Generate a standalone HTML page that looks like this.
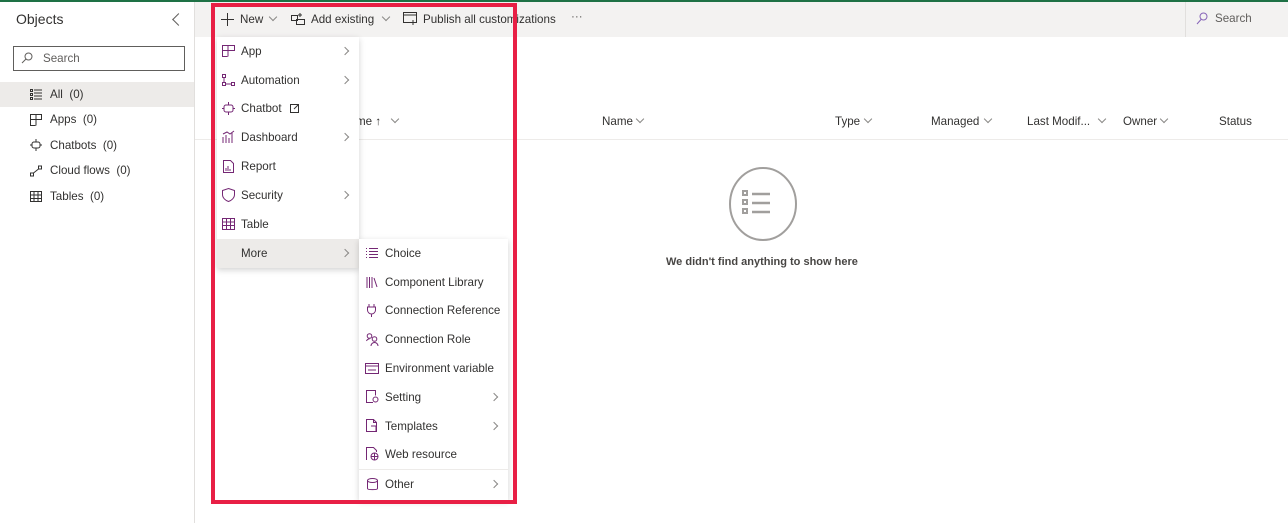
<!DOCTYPE html>
<html><head><meta charset="utf-8"><style>
*{box-sizing:border-box;margin:0;padding:0}
body{width:1288px;height:523px;overflow:hidden;background:#fff;font-family:"Liberation Sans",sans-serif;font-size:11.6px;color:#323130;position:relative}
.a{position:absolute}
.t{position:absolute;white-space:nowrap;line-height:14px}
svg{position:absolute;overflow:visible}
.chev{position:absolute;width:6px;height:6px;border-right:1px solid #8a8886;border-bottom:1px solid #8a8886;transform:rotate(-45deg)}
.dn{position:absolute;width:6px;height:6px;border-right:1px solid #8a8886;border-bottom:1px solid #8a8886;transform:rotate(45deg)}
</style></head><body>
<div class="a" style="left:0;top:0;width:1288px;height:2px;background:#1e7145"></div>
<div class="a" style="left:194px;top:2px;width:1px;height:521px;background:#e1dfdd"></div>
<div class="t" style="left:16px;top:12px;font-size:14px">Objects</div>
<div class="a" style="left:174px;top:15px;width:9px;height:9px;border-left:1px solid #605e5c;border-bottom:1px solid #605e5c;transform:rotate(45deg)"></div>
<div class="a" style="left:13px;top:46px;width:172px;height:25px;border:1px solid #605e5c"></div>
<svg style="left:21px;top:52px" width="12" height="12"><circle cx="7.5" cy="4.5" r="3.5" fill="none" stroke="#605e5c"/><path d="M5 7L1 11" stroke="#605e5c"/></svg>
<div class="t" style="left:43px;top:52px;color:#605e5c">Search</div>
<div class="a" style="left:0;top:82px;width:194px;height:25px;background:#edebe9"></div>
<svg style="left:30px;top:89px" width="12" height="12" stroke="#323130" fill="none"><path d="M4 1h8M4 4h8M4 7h8M4 10h8"/><rect x="0.5" y="0.5" width="2" height="2"/><rect x="0.5" y="4.5" width="2" height="2"/><rect x="0.5" y="8.5" width="2" height="2"/></svg>
<div class="t" style="left:50px;top:88px">All&nbsp; (0)</div>
<svg style="left:30px;top:114px" width="12" height="12" stroke="#323130" fill="none"><path d="M0.5 0.5h11v5h-11zM6 0.5v11M0.5 5.5v6h5"/></svg>
<div class="t" style="left:50px;top:113px">Apps&nbsp; (0)</div>
<svg style="left:30px;top:139px" width="12" height="12" stroke="#323130" fill="none"><rect x="2" y="3" width="8" height="6" rx="2"/><path d="M6 0v3M6 9v3M0 6h2M10 6h2"/></svg>
<div class="t" style="left:50px;top:139px">Chatbots&nbsp; (0)</div>
<svg style="left:30px;top:165px" width="12" height="12" stroke="#323130" fill="none"><rect x="0.5" y="8" width="3" height="3"/><rect x="8.5" y="1" width="3" height="3"/><path d="M3.5 8L8.5 4"/></svg>
<div class="t" style="left:50px;top:164px">Cloud flows&nbsp; (0)</div>
<svg style="left:30px;top:191px" width="12" height="12" stroke="#323130" fill="none"><rect x="0.5" y="0.5" width="11" height="10"/><path d="M0.5 4h11M0.5 7.5h11M4 0.5v10M8 0.5v10"/></svg>
<div class="t" style="left:50px;top:190px">Tables&nbsp; (0)</div>
<div class="a" style="left:195px;top:2px;width:1093px;height:35px;background:#f3f2f1"></div>
<div class="a" style="left:1185px;top:2px;width:1px;height:35px;background:#e1dfdd"></div>
<svg style="left:221px;top:13px" width="13" height="13" stroke="#323130"><path d="M6.5 0v13M0 6.5h13"/></svg>
<div class="t" style="left:240px;top:13px">New</div>
<div class="dn" style="left:270px;top:14px"></div>
<svg style="left:291px;top:12px" width="14" height="13" stroke="#323130" fill="none"><rect x="0.5" y="3.5" width="6" height="5"/><rect x="5.5" y="7.5" width="8" height="5"/><path d="M9 1v4M7 3h4"/></svg>
<div class="t" style="left:311px;top:13px">Add existing</div>
<div class="dn" style="left:383px;top:14px"></div>
<svg style="left:403px;top:12px" width="14" height="13" stroke="#323130" fill="none"><rect x="0.5" y="0.5" width="13" height="10"/><path d="M0.5 3h13M10 8v5"/></svg>
<div class="t" style="left:423px;top:13px">Publish all customizations</div>
<div class="t" style="left:571px;top:10px;color:#605e5c">···</div>
<svg style="left:1196px;top:12px" width="12" height="13"><circle cx="7.5" cy="4.5" r="3.5" fill="none" stroke="#8764b8"/><path d="M5 7.5L1 12" stroke="#8764b8"/></svg>
<div class="t" style="left:1215px;top:12px;color:#605e5c">Search</div>
<div class="a" style="left:195px;top:139px;width:1093px;height:1px;background:#edebe9"></div>
<div class="t" style="left:356px;top:115px">me ↑</div><div class="dn" style="left:392px;top:116px"></div>
<div class="t" style="left:602px;top:115px">Name</div><div class="dn" style="left:637px;top:116px"></div>
<div class="t" style="left:835px;top:115px">Type</div><div class="dn" style="left:865px;top:116px"></div>
<div class="t" style="left:931px;top:115px">Managed</div><div class="dn" style="left:985px;top:116px"></div>
<div class="t" style="left:1027px;top:115px">Last Modif...</div><div class="dn" style="left:1099px;top:116px"></div>
<div class="t" style="left:1123px;top:115px">Owner</div><div class="dn" style="left:1161px;top:116px"></div>
<div class="t" style="left:1219px;top:115px">Status</div>
<svg style="left:729px;top:167px" width="68" height="74" fill="none" stroke="#a19f9d" stroke-width="2"><ellipse cx="34" cy="37" rx="33" ry="36"/><path d="M23 27h18M23 36h18M23 45h18" stroke-width="2.5"/><rect x="14" y="24" width="4" height="4"/><rect x="14" y="33" width="4" height="4"/><rect x="14" y="42" width="4" height="4"/></svg>
<div class="t" style="left:666px;top:255px;font-size:11px;font-weight:bold;color:#484644">We didn't find anything to show here</div>
<div class="a" style="left:217px;top:37px;width:142px;height:231px;background:#fff;box-shadow:0 2px 6px rgba(0,0,0,.18)"></div>
<div class="a" style="left:217px;top:239px;width:142px;height:29px;background:#edebe9"></div>
<svg style="left:222px;top:45px" width="13" height="12" stroke="#742774" fill="none"><path d="M0.5 0.5h12v5h-12zM6 0.5v11M0.5 5.5v6h5"/></svg>
<div class="t" style="left:241px;top:45px">App</div><div class="chev" style="left:342px;top:48px"></div>
<svg style="left:222px;top:74px" width="13" height="13" stroke="#742774" fill="none"><rect x="0.5" y="0.5" width="3" height="3"/><rect x="0.5" y="8.5" width="3" height="3"/><rect x="9.5" y="8.5" width="3" height="3"/><path d="M2 3.5v5M3.5 10h6"/></svg>
<div class="t" style="left:241px;top:74px">Automation</div><div class="chev" style="left:342px;top:77px"></div>
<svg style="left:222px;top:102px" width="13" height="13" stroke="#742774" fill="none"><rect x="2" y="3" width="9" height="7" rx="2"/><path d="M6.5 0v3M6.5 10v3M0 6.5h2M11 6.5h2"/></svg>
<div class="t" style="left:241px;top:102px">Chatbot</div>
<svg style="left:290px;top:104px" width="9" height="9" stroke="#323130" fill="none"><rect x="0.5" y="0.5" width="8" height="8"/><path d="M4 5l4-4"/></svg>
<svg style="left:222px;top:130px" width="13" height="13" stroke="#742774" fill="none"><path d="M1 13V7M4 13V5M7 13V8M10 13V3M1 4l4-2 3 2 4-3"/></svg>
<div class="t" style="left:241px;top:131px">Dashboard</div><div class="chev" style="left:342px;top:134px"></div>
<svg style="left:223px;top:160px" width="11" height="13" stroke="#742774" fill="none"><path d="M0.5 0.5h7l3 3v9h-10z"/><path d="M3 11V8M5 11V6M7 11V9"/></svg>
<div class="t" style="left:241px;top:160px">Report</div>
<svg style="left:222px;top:188px" width="13" height="14" stroke="#742774" fill="none"><path d="M6.5 0.5L12.5 2.5v4c0 3.5-3 6-6 7-3-1-6-3.5-6-7v-4z"/></svg>
<div class="t" style="left:241px;top:189px">Security</div><div class="chev" style="left:342px;top:192px"></div>
<svg style="left:222px;top:218px" width="13" height="12" stroke="#742774" fill="none"><rect x="0.5" y="0.5" width="12" height="11"/><path d="M0.5 4h12M0.5 7.5h12M4.5 0.5v11M8.5 0.5v11"/></svg>
<div class="t" style="left:241px;top:218px">Table</div>
<div class="t" style="left:241px;top:247px">More</div><div class="chev" style="left:342px;top:250px"></div>
<div class="a" style="left:359px;top:239px;width:149px;height:261px;background:#fff;box-shadow:0 2px 6px rgba(0,0,0,.18)"></div>
<div class="a" style="left:359px;top:469px;width:149px;height:1px;background:#edebe9"></div>
<svg style="left:366px;top:248px" width="12" height="10" stroke="#742774" fill="none"><path d="M0 0.5h1M3 0.5h9M0 3.5h1M3 3.5h9M0 6.5h1M3 6.5h9M0 9.5h1M3 9.5h9"/></svg>
<div class="t" style="left:385px;top:247px">Choice</div>
<svg style="left:366px;top:277px" width="12" height="11" stroke="#742774" fill="none"><path d="M1 0v11M3.5 0v11M6 0v11M8 1l3 9"/></svg>
<div class="t" style="left:385px;top:276px">Component Library</div>
<svg style="left:367px;top:304px" width="9" height="13" stroke="#742774" fill="none"><path d="M2 0v3M7 0v3M0.5 3h8v3a4 4 0 0 1-8 0zM4.5 10v3"/></svg>
<div class="t" style="left:385px;top:304px">Connection Reference</div>
<svg style="left:366px;top:333px" width="13" height="13" stroke="#742774" fill="none"><circle cx="3.5" cy="3" r="2.3"/><circle cx="8.5" cy="6" r="2.3"/><path d="M0.5 8a3 3 0 0 1 3-2M5 13a3.5 3.5 0 0 1 7 0"/></svg>
<div class="t" style="left:385px;top:333px">Connection Role</div>
<svg style="left:365px;top:363px" width="14" height="11" stroke="#742774" fill="none"><rect x="0.5" y="0.5" width="13" height="10"/><path d="M0.5 3h13M3 7h8"/></svg>
<div class="t" style="left:385px;top:362px">Environment variable</div>
<svg style="left:366px;top:390px" width="13" height="13" stroke="#742774" fill="none"><path d="M7 12.5H0.5v-12h9v5"/><circle cx="9.5" cy="9.5" r="2.5"/></svg>
<div class="t" style="left:385px;top:391px">Setting</div><div class="chev" style="left:491px;top:394px"></div>
<svg style="left:366px;top:419px" width="12" height="13" stroke="#742774" fill="none"><path d="M0.5 0.5h7l3 3v9h-10z"/><path d="M7.5 0.5v3h3M5 7h5v5"/></svg>
<div class="t" style="left:385px;top:420px">Templates</div><div class="chev" style="left:491px;top:423px"></div>
<svg style="left:366px;top:447px" width="13" height="14" stroke="#742774" fill="none"><path d="M0.5 13V0.5h7l3 3V5"/><circle cx="8.5" cy="9.5" r="3.5"/><path d="M5 9.5h7M8.5 6v7"/></svg>
<div class="t" style="left:385px;top:448px">Web resource</div>
<svg style="left:367px;top:478px" width="11" height="13" stroke="#742774" fill="none"><path d="M0.5 2.5v8c0 1.5 10 1.5 10 0v-8"/><ellipse cx="5.5" cy="2.5" rx="5" ry="2"/></svg>
<div class="t" style="left:385px;top:478px">Other</div><div class="chev" style="left:491px;top:481px"></div>
<div class="a" style="left:211px;top:3px;width:306px;height:501px;border:4px solid #e81f45"></div>
</body></html>
